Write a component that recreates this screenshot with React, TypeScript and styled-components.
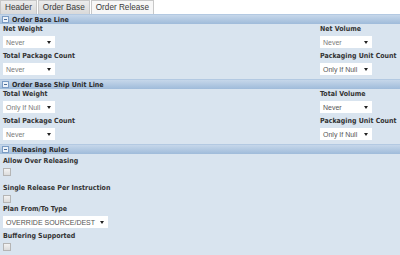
import React from 'react';
import styled, { createGlobalStyle } from 'styled-components';

const GlobalStyle = createGlobalStyle`
  html, body {
    margin: 0;
    padding: 0;
    background: #ffffff;
  }
  body {
    width: 400px;
    height: 255px;
    overflow: hidden;
    font-family: "DejaVu Sans Condensed", "Liberation Sans", sans-serif;
  }
`;

type Field = {
    label: string;
    kind: 'select' | 'check';
    value?: string;
    width?: number;
    dim?: boolean;
    after?: number;
};

type Section = {
    title: string;
    top: number;
    left: Field[];
    right: Field[];
};

const sections: Section[] = [
    {
        title: 'Order Base Line',
        top: 1,
        left: [
            { label: 'Net Weight', kind: 'select', value: 'Never', dim: true },
            { label: 'Total Package Count', kind: 'select', value: 'Never', dim: true },
        ],
        right: [
            { label: 'Net Volume', kind: 'select', value: 'Never', dim: true },
            { label: 'Packaging Unit Count', kind: 'select', value: 'Only If Null' },
        ],
    },
    {
        title: 'Order Base Ship Unit Line',
        top: 1,
        left: [
            { label: 'Total Weight', kind: 'select', value: 'Only If Null', dim: true },
            { label: 'Total Package Count', kind: 'select', value: 'Never', dim: true },
        ],
        right: [
            { label: 'Total Volume', kind: 'select', value: 'Never' },
            { label: 'Packaging Unit Count', kind: 'select', value: 'Only If Null' },
        ],
    },
    {
        title: 'Releasing Rules',
        top: 3,
        left: [
            { label: 'Allow Over Releasing', kind: 'check', after: 8 },
            { label: 'Single Release Per Instruction', kind: 'check', after: 2 },
            { label: 'Plan From/To Type', kind: 'select', value: 'OVERRIDE SOURCE/DEST', width: 105, after: 4 },
            { label: 'Buffering Supported', kind: 'check' },
        ],
        right: [],
    },
];

const tabs = ['Header', 'Order Base', 'Order Release'];

const renderField = (f: Field, i: number) => (
    <FieldBox key={i} $after={f.after ?? 4}>
        <Label>{f.label}</Label>
        {f.kind === 'select' ? (
            <SelectBox $width={f.width ?? 52} $dim={f.dim}>
                <span>{f.value}</span>
                <Arrow />
            </SelectBox>
        ) : (
            <CheckBox />
        )}
    </FieldBox>
);

export default function App() {
    return (
        <>
            <GlobalStyle />
            <Page>
                <TabBar>
                    {tabs.map((t, i) => (
                        <Tab key={t} $active={i === 2}>{t}</Tab>
                    ))}
                </TabBar>
                <Panel>
                    {sections.map((s) => (
                        <div key={s.title}>
                            <SectionHeader>
                                <Toggle />
                                <span>{s.title}</span>
                            </SectionHeader>
                            <SectionBody $top={s.top}>
                                <Column>{s.left.map(renderField)}</Column>
                                <Column>{s.right.map(renderField)}</Column>
                            </SectionBody>
                        </div>
                    ))}
                </Panel>
            </Page>
        </>
    );
}

const Page = styled.div`
  width: 400px;
  height: 255px;
  display: flex;
  flex-direction: column;
`;

const TabBar = styled.div`
  display: flex;
  height: 14px;
  gap: 1px;
`;

const Tab = styled.div<{ $active?: boolean }>`
  box-sizing: border-box;
  height: 14px;
  padding: 0 4px;
  display: flex;
  align-items: center;
  font-family: "Liberation Sans", Arial, sans-serif;
  font-size: 8.2px;
  color: #3a3a3a;
  border: 1px solid #c8c8c8;
  border-bottom: none;
  background: ${(p) => (p.$active ? '#f7f7f7' : 'linear-gradient(#ececec, #d9d9d9)')};
`;

const Panel = styled.div`
  flex: 1;
  background: #d9e4ef;
  border-bottom: 2px solid #a9c2df;
`;

const SectionHeader = styled.div`
  box-sizing: border-box;
  height: 10px;
  display: flex;
  align-items: center;
  gap: 3px;
  padding-left: 2px;
  background: linear-gradient(#c6d7ea, #9fbbda);
  border-top: 1px solid #b3c9e2;
  font-size: 7px;
  font-weight: bold;
  color: #2b2b2b;
`;

const Toggle = styled.div`
  box-sizing: border-box;
  width: 7px;
  height: 7px;
  border: 1px solid #7b9cc4;
  background: #eef3f9;
  position: relative;
  &::after {
    content: '';
    position: absolute;
    left: 1px;
    right: 1px;
    top: 2px;
    height: 1px;
    background: #4a6d9a;
  }
`;

const SectionBody = styled.div<{ $top: number }>`
  display: grid;
  grid-template-columns: 1fr 80px;
  padding: ${(p) => p.$top}px 0 0 3px;
`;

const Column = styled.div`
  display: flex;
  flex-direction: column;
`;

const FieldBox = styled.div<{ $after: number }>`
  display: flex;
  flex-direction: column;
  gap: 2px;
  margin-bottom: ${(p) => p.$after}px;
`;

const Label = styled.div`
  height: 9px;
  line-height: 9px;
  font-size: 7px;
  font-weight: bold;
  color: #333333;
  white-space: nowrap;
`;

const SelectBox = styled.div<{ $width: number; $dim?: boolean }>`
  box-sizing: border-box;
  width: ${(p) => p.$width}px;
  height: 12px;
  padding: 0 3px;
  display: flex;
  align-items: center;
  justify-content: space-between;
  background: #ffffff;
  font-family: "Liberation Sans", Arial, sans-serif;
  font-size: 7px;
  color: ${(p) => (p.$dim ? '#7a7a7a' : '#555555')};
  white-space: nowrap;
`;

const Arrow = styled.div`
  width: 0;
  height: 0;
  border-left: 2px solid transparent;
  border-right: 2px solid transparent;
  border-top: 3px solid #222222;
  margin-right: 1px;
`;

const CheckBox = styled.div`
  box-sizing: border-box;
  width: 8px;
  height: 8px;
  border: 1px solid #b5b5b5;
  background: linear-gradient(#f3f3f3, #dcdcdc);
`;
